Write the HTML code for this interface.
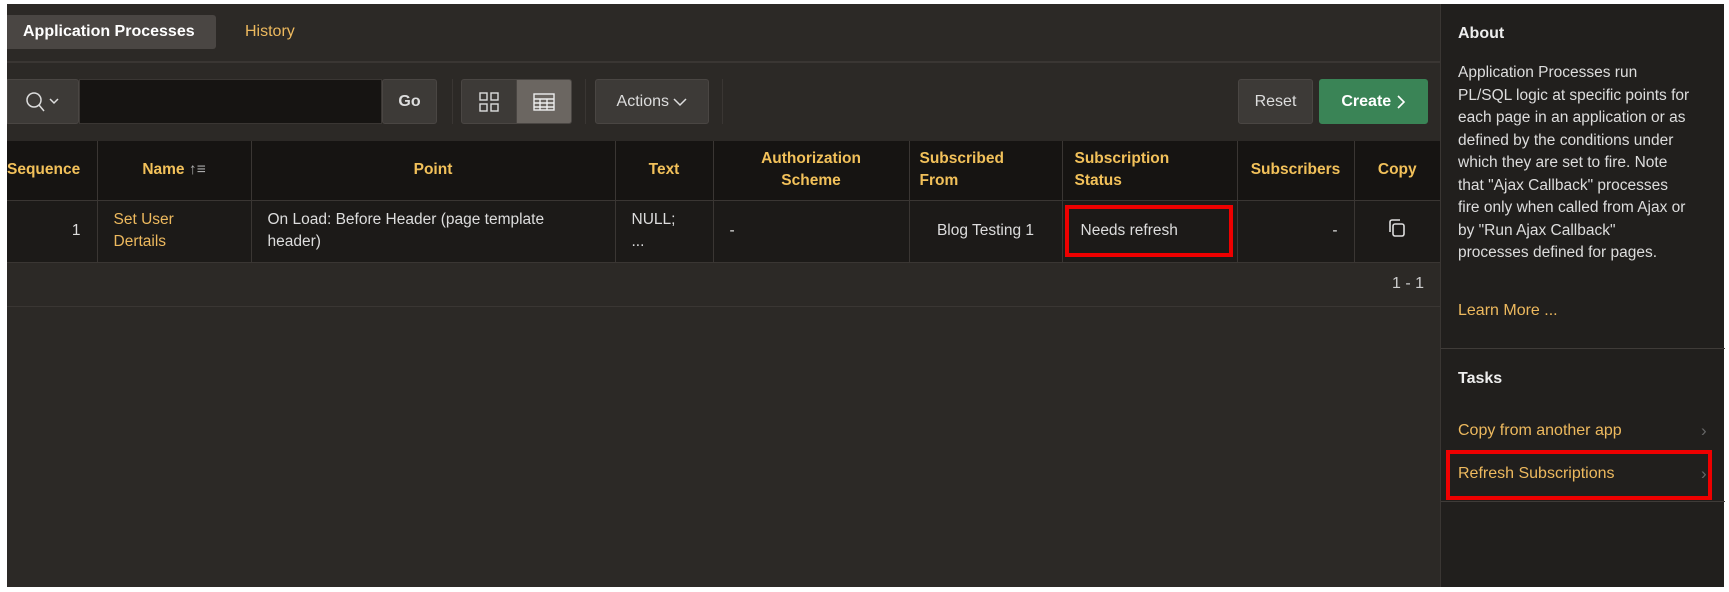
<!DOCTYPE html>
<html><head><meta charset="utf-8"><style>
*{box-sizing:border-box;margin:0;padding:0}
body{width:1729px;height:592px;background:#fff;font-family:"Liberation Sans",sans-serif;position:relative;overflow:hidden}
.main{position:absolute;left:7px;top:4px;width:1433px;height:583px;background:#2c2926}
.side{position:absolute;left:1440px;top:4px;width:284px;height:583px;background:#211f1d;border-left:1px solid #3a3633}
.abs{position:absolute}
.btn{position:absolute;top:75px;height:45px;background:#3d3a37;border:1px solid #4a4643;border-radius:3px;color:#ddd;font-size:16px;display:flex;align-items:center;justify-content:center}
th,td{border-right:1px solid #3a3633;font-size:15.5px}
table{position:absolute;left:0;top:137px;border-collapse:collapse;width:1433px;table-layout:fixed}
th{background:#161412;color:#f2c15a;height:59px;font-weight:bold;line-height:22px}
td{background:#1c1a18;color:#ddd;height:62px;line-height:22px;vertical-align:middle;padding:0 16px;border-top:1px solid #3a3633;border-bottom:1px solid #3a3633}
.y{color:#edb95e}
.side p{color:#ddd;font-size:15.5px;line-height:22.5px}
</style></head><body>
<div class="main">
 <div class="abs" style="left:0;top:11px;width:209px;height:34px;background:#4a4643;border-radius:0 3px 3px 0;color:#fff;font-weight:bold;font-size:16px;line-height:34px;padding-left:16px">Application Processes</div>
 <div class="abs y" style="left:238px;top:11px;line-height:34px;font-size:16px">History</div>
 <div class="abs" style="left:0;top:57px;width:1433px;height:2px;background:#3a3633"></div>
 <div class="btn" style="left:0;width:72px;border-radius:0 3px 3px 0">
  <svg width="40" height="24" viewBox="0 0 40 24"><circle cx="11" cy="10" r="7" fill="none" stroke="#ddd" stroke-width="1.5"/><path d="M16 15l5 6" stroke="#ddd" stroke-width="1.5"/><path d="M27 9l4 4 4-4" fill="none" stroke="#ddd" stroke-width="1.5"/></svg></div>
 <div class="abs" style="left:72px;top:75px;width:303px;height:45px;background:#161412;border:1px solid #3a3633"></div>
 <div class="btn" style="left:375px;width:55px;font-weight:bold">Go</div>
 <div class="abs" style="left:445px;top:75px;width:1px;height:45px;background:#3a3633"></div>
 <div class="btn" style="left:454px;width:56px;border-radius:3px 0 0 3px"><svg width="20" height="20"><g fill="none" stroke="#ddd" stroke-width="1.4"><rect x="1" y="1" width="7" height="7"/><rect x="12" y="1" width="7" height="7"/><rect x="1" y="12" width="7" height="7"/><rect x="12" y="12" width="7" height="7"/></g></svg></div>
 <div class="btn" style="left:509px;width:56px;background:#6b6661;border-radius:0 3px 3px 0"><svg width="22" height="18"><g fill="none" stroke="#eee" stroke-width="1.4"><rect x="1" y="1" width="20" height="16"/><path d="M1 6h20M1 10h20M1 14h20M7 6v11M14 6v11"/></g></svg></div>
 <div class="abs" style="left:578px;top:75px;width:1px;height:45px;background:#3a3633"></div>
 <div class="btn" style="left:588px;width:114px">Actions&nbsp;<svg width="14" height="10"><path d="M1 2l6 6 6-6" fill="none" stroke="#ddd" stroke-width="1.5"/></svg></div>
 <div class="abs" style="left:715px;top:75px;width:1px;height:45px;background:#3a3633"></div>
 <div class="btn" style="left:1231px;width:75px">Reset</div>
 <div class="btn" style="left:1312px;width:109px;background:#3a8456;border-color:#3a8456;color:#fff;font-weight:bold">Create&nbsp;<svg width="10" height="14"><path d="M2 1l6 6-6 6" fill="none" stroke="#fff" stroke-width="1.6"/></svg></div>
 <table>
  <colgroup><col style="width:90px"><col style="width:154px"><col style="width:364px"><col style="width:98px"><col style="width:196px"><col style="width:153px"><col style="width:175px"><col style="width:117px"><col style="width:86px"></colgroup>
  <tr><th style="text-align:left;padding-left:0">Sequence</th><th>Name <span style="color:#aaa;font-weight:normal">↑≡</span></th><th>Point</th><th>Text</th><th>Authorization<br>Scheme</th><th style="text-align:left;padding-left:10px">Subscribed<br>From</th><th style="text-align:left;padding-left:12px">Subscription<br>Status</th><th>Subscribers</th><th style="border-right:none">Copy</th></tr>
  <tr><td style="text-align:right">1</td><td class="y">Set User<br>Dertails</td><td>On Load: Before Header (page template<br>header)</td><td>NULL;<br>...</td><td>-</td><td style="text-align:center">Blog Testing 1</td><td style="padding:0 4px 0 2px"><div style="border:4px solid #e00;height:52px;line-height:44px;padding-left:12px">Needs refresh</div></td><td style="text-align:right">-</td><td style="text-align:center;border-right:none"><svg width="22" height="22"><g fill="none" stroke="#ddd" stroke-width="1.6"><rect x="7" y="7" width="11" height="12" rx="2"/><path d="M4 15V5a2 2 0 0 1 2-2h8"/></g></svg></td></tr>
 </table>
 <div class="abs" style="left:0;top:258px;width:1433px;height:45px;border-bottom:1px solid #3a3633;color:#ccc;font-size:16px;text-align:right;padding-right:16px;line-height:44px">1 - 1</div>
</div>
<div class="side">
 <div class="abs" style="left:17px;top:21px;color:#eee;font-weight:bold;font-size:16px">About</div>
 <p class="abs" style="left:17px;top:58px;width:232px">Application Processes run PL/SQL logic at specific points for each page in an application or as defined by the conditions under which they are set to fire. Note that "Ajax Callback" processes fire only when called from Ajax or by "Run Ajax Callback" processes defined for pages.</p>
 <div class="abs y" style="left:17px;top:298px;font-size:16px">Learn More ...</div>
 <div class="abs" style="left:0;top:344px;width:284px;height:1px;background:#3f3b38"></div>
 <div class="abs" style="left:17px;top:366px;color:#eee;font-weight:bold;font-size:16px">Tasks</div>
 <div class="abs y" style="left:17px;top:418px;font-size:16px">Copy from another app</div>
 <div class="abs" style="left:260px;top:417px;color:#666;font-size:17px">›</div>
 <div class="abs" style="left:5px;top:446px;width:266px;height:50px;border:4px solid #e00"></div>
 <div class="abs y" style="left:17px;top:461px;font-size:16px">Refresh Subscriptions</div>
 <div class="abs" style="left:260px;top:460px;color:#666;font-size:17px">›</div>
 <div class="abs" style="left:0;top:497px;width:284px;height:1px;background:#3f3b38"></div>
</div>
</body></html>
